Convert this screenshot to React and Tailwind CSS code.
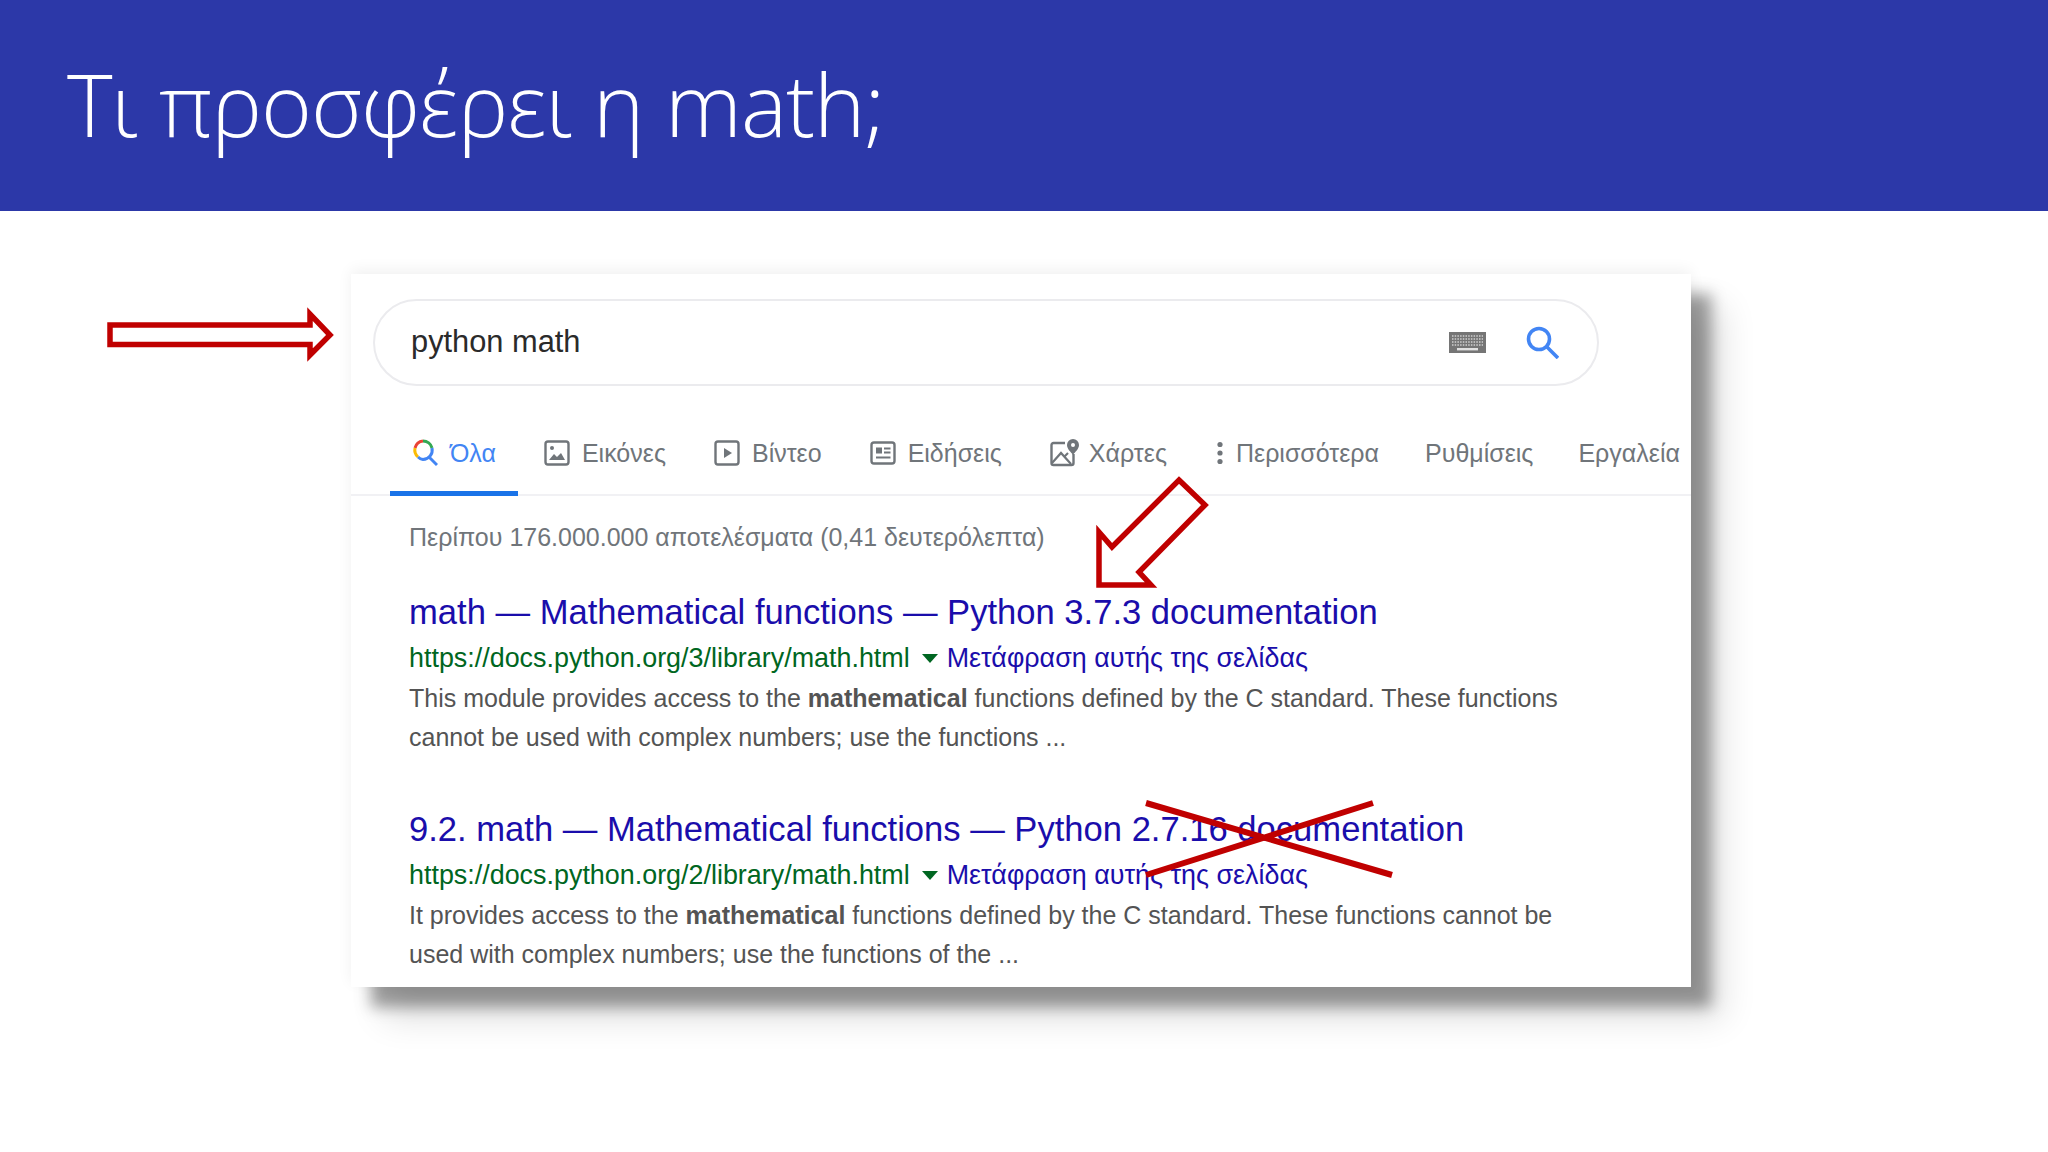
const ARIAL = { fontFamily: '"Liberation Sans", Arial, sans-serif' }

function GoogleLens() {
  return (
    <svg width="26" height="28" viewBox="0 0 26 28" fill="none" strokeWidth="3">
      <path d="M3 9 A9.5 9.5 0 0 1 11 2" stroke="#ea4335" />
      <path d="M11 2 A9.5 9.5 0 0 1 20 9" stroke="#34a853" />
      <path d="M3 9 A9.5 9.5 0 0 0 6 18" stroke="#fbbc05" />
      <path d="M6 18 A9.5 9.5 0 0 0 11 20.5 A9.5 9.5 0 0 0 20 9" stroke="#4285f4" />
      <path d="M17 18 L25 26" stroke="#4285f4" />
    </svg>
  )
}

function ImageIcon() {
  return (
    <svg width="26" height="26" viewBox="0 0 26 26" fill="none">
      <rect x="1.5" y="1.5" width="23" height="23" rx="2.5" stroke="#70757a" strokeWidth="2.4" />
      <circle cx="8" cy="8" r="2" fill="#70757a" />
      <path d="M5 20 L10 14 L13 17 L17 13 L21 20 Z" fill="#70757a" />
    </svg>
  )
}

function VideoIcon() {
  return (
    <svg width="26" height="26" viewBox="0 0 26 26" fill="none">
      <rect x="1.5" y="1.5" width="23" height="23" rx="2.5" stroke="#70757a" strokeWidth="2.4" />
      <path d="M10 8 L18 13 L10 18 Z" fill="#70757a" />
    </svg>
  )
}

function NewsIcon() {
  return (
    <svg width="26" height="24" viewBox="0 0 26 24" fill="none">
      <rect x="1.5" y="1.5" width="23" height="21" rx="2.5" stroke="#70757a" strokeWidth="2.4" />
      <rect x="6" y="6.5" width="6" height="6" fill="#70757a" />
      <path d="M14 7.5 H20.5 M14 11.5 H20.5 M6 16.5 H20.5" stroke="#70757a" strokeWidth="2" />
    </svg>
  )
}

function MapIcon() {
  return (
    <svg width="29" height="28" viewBox="0 0 29 28" fill="none">
      <path d="M15 4 H3.5 A2 2 0 0 0 1.5 6 V24 A2 2 0 0 0 3.5 26 H21.5 A2 2 0 0 0 23.5 24 V15" stroke="#70757a" strokeWidth="2.4" />
      <path d="M2 24 L11 14 L21 25" stroke="#70757a" strokeWidth="2.2" />
      <path d="M14 18 L18 14" stroke="#70757a" strokeWidth="2.2" />
      <path d="M23 0 A6 6 0 0 1 29 6 C29 10 25 13 23 16 C21 13 17 10 17 6 A6 6 0 0 1 23 0 Z" fill="#70757a" />
      <circle cx="23" cy="6" r="2" fill="#fff" />
    </svg>
  )
}

function DotsIcon() {
  return (
    <svg width="6" height="24" viewBox="0 0 6 24" fill="#70757a">
      <circle cx="3" cy="3.5" r="2.6" />
      <circle cx="3" cy="12" r="2.6" />
      <circle cx="3" cy="20.5" r="2.6" />
    </svg>
  )
}

function KeyboardIcon() {
  return (
    <svg width="37" height="21" viewBox="0 0 37 21">
      <rect width="37" height="21" fill="#757575" />
      <path d="M3 4 H34 M3 7 H34 M3 10 H34 M3 13 H34" stroke="#d0d0d0" strokeWidth="1.5" strokeDasharray="1.5 1.2" />
      <rect x="8" y="16" width="21" height="2.4" fill="#e0e0e0" />
    </svg>
  )
}

function SearchIcon() {
  return (
    <svg width="33" height="33" viewBox="0 0 33 33" fill="none" stroke="#4285f4" strokeWidth="3.6">
      <circle cx="13" cy="13" r="10.5" />
      <path d="M20.5 20.5 L32 32" />
    </svg>
  )
}

function Tab({ icon, label, active, gap = 'gap-3', className = '' }) {
  return (
    <div className={`flex items-center h-full shrink-0 pb-[7px] [&>svg]:mb-[3px] ${gap} ${className}`}>
      {icon}
      <span className={active ? 'text-[#4285f4]' : 'text-[#70757a]'}>{label}</span>
    </div>
  )
}

function Result({ title, url, snippet, className = '' }) {
  return (
    <div className={className}>
      <div className="text-[34.6px] leading-[44px] text-[#1a0dab]">{title}</div>
      <div className="flex items-center h-[40px] mt-[4px] text-[26.9px]">
        <span className="text-[#006621]">{url}</span>
        <span className="ml-[12px] mr-[9px] w-0 h-0 border-x-[8px] border-x-transparent border-t-[9px] border-t-[#006621]" />
        <span className="text-[#1a0dab]">Μετάφραση αυτής της σελίδας</span>
      </div>
      <div className="text-[25px] leading-[38.5px] text-[#545454] mt-[1px]">{snippet}</div>
    </div>
  )
}

export default function App() {
  return (
    <div className="relative w-[2048px] h-[1152px] bg-white overflow-hidden">
      <header className="h-[211px] bg-[#2c38a8] flex items-center pl-[67px] pb-[4px]">
        <h1 className="text-[87px] font-light text-white tracking-[-1px]" style={{ fontFamily: '"Open Sans", sans-serif' }}>
          Τι προσφέρει η math;
        </h1>
      </header>

      <main className="pt-[63px] pl-[351px]">
        <div
          className="w-[1340px] h-[713px] bg-white overflow-hidden shadow-[0_-4px_14px_rgba(0,0,0,0.06),20px_20px_14px_rgba(0,0,0,0.36),32px_32px_32px_rgba(0,0,0,0.12)]"
          style={ARIAL}
        >
          <div className="pt-[25px] pl-[22px]">
            <div className="w-[1226px] h-[87px] rounded-full border-2 border-[#ebebee] flex items-center pl-[36px] pr-[38px]">
              <span className="text-[30.8px] text-[#2a2a2a] flex-1">python math</span>
              <KeyboardIcon />
              <span className="ml-[40px]"><SearchIcon /></span>
            </div>
          </div>

          <nav className="relative mt-[35px] h-[75px] flex items-center text-[25px] border-b-2 border-[#f1f1f4] pl-[39px]">
            <div className="relative h-full flex items-center px-[22px] mr-[26px]">
              <Tab icon={<GoogleLens />} label="Όλα" active />
              <span className="absolute left-0 right-0 bottom-[-2px] h-[5px] bg-[#1a73e8]" />
            </div>
            <Tab icon={<ImageIcon />} label="Εικόνες" className="mr-[48px]" />
            <Tab icon={<VideoIcon />} label="Βίντεο" className="mr-[48px]" />
            <Tab icon={<NewsIcon />} label="Ειδήσεις" className="mr-[48px]" />
            <Tab icon={<MapIcon />} label="Χάρτες" className="mr-[50px]" gap="gap-[10px]" />
            <Tab icon={<DotsIcon />} label="Περισσότερα" className="mr-[46px]" gap="gap-[13px]" />
            <Tab label="Ρυθμίσεις" className="mr-[45px]" />
            <Tab label="Εργαλεία" />
          </nav>

          <div className="pl-[58px]">
            <div className="mt-[23px] text-[25px] leading-[36px] text-[#70757a]">
              Περίπου 176.000.000 αποτελέσματα (0,41 δευτερόλεπτα)
            </div>
            <Result
              className="mt-[35px]"
              title="math — Mathematical functions — Python 3.7.3 documentation"
              url="https://docs.python.org/3/library/math.html"
              snippet={
                <>
                  This module provides access to the <b>mathematical</b> functions defined by the C standard. These functions
                  <br />
                  cannot be used with complex numbers; use the functions ...
                </>
              }
            />
            <Result
              className="mt-[51px]"
              title="9.2. math — Mathematical functions — Python 2.7.16 documentation"
              url="https://docs.python.org/2/library/math.html"
              snippet={
                <>
                  It provides access to the <b>mathematical</b> functions defined by the C standard. These functions cannot be
                  <br />
                  used with complex numbers; use the functions of the ...
                </>
              }
            />
          </div>
        </div>
      </main>

      {/* red annotations drawn on top of the slide */}
      <svg className="absolute inset-0 pointer-events-none" width="2048" height="1152" viewBox="0 0 2048 1152" fill="none" stroke="#c00000">
        <path d="M110 325 H310 V314 L330 335 L310 355 V344.500 H110 Z" strokeWidth="5.500" />
        <path d="M1179 480 L1205 505 L1139 572 L1151 585 H1099 V532 L1112 547 Z" strokeWidth="5.500" />
        <path d="M1146 803 L1392 875 M1373 803 L1146 875" strokeWidth="6" />
      </svg>
    </div>
  )
}
